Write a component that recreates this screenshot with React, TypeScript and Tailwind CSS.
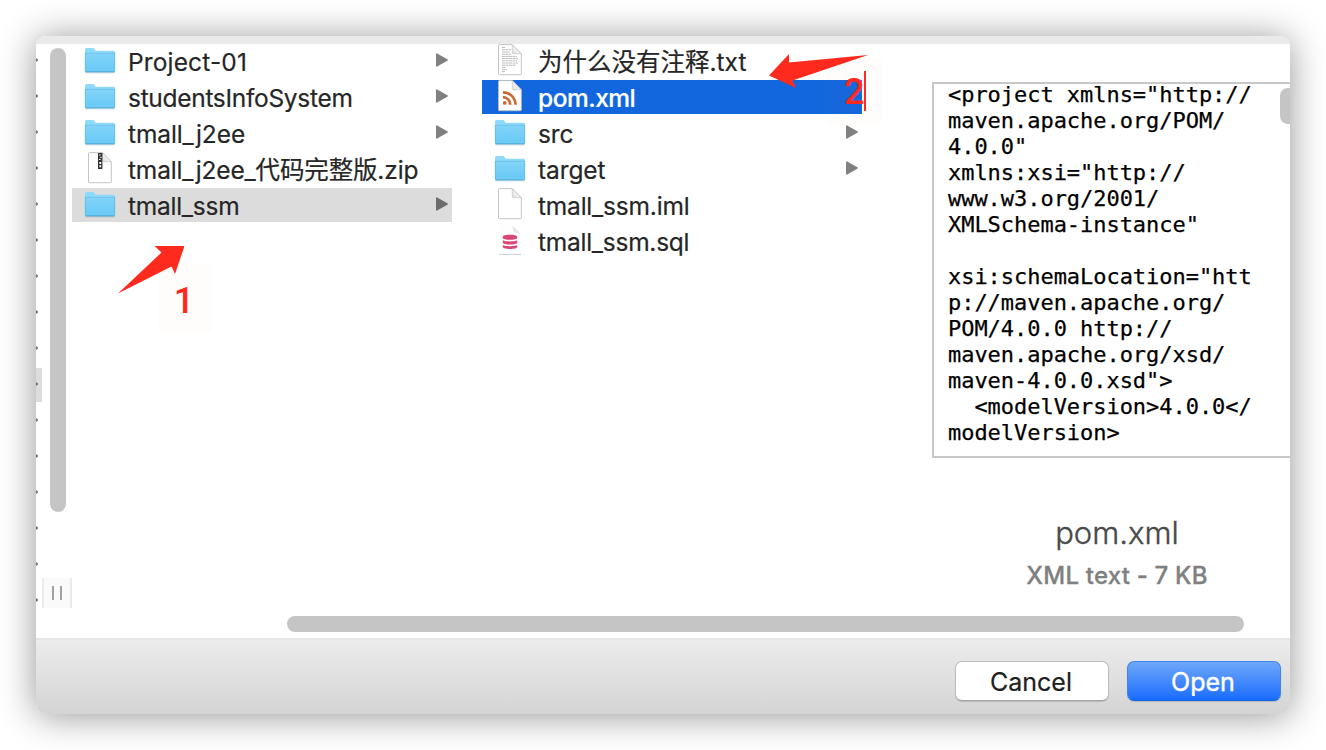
type IconKind = "folder" | "zip" | "text" | "feed" | "blank" | "database";

type Entry = {
  name: string;
  icon: IconKind;
  tracking: string;
};

const projects: Entry[] = [
  { name: "Project-01", icon: "folder", tracking: "tracking-[0.15px]" },
  { name: "studentsInfoSystem", icon: "folder", tracking: "tracking-[-0.3px]" },
  { name: "tmall_j2ee", icon: "folder", tracking: "tracking-[-0.1px]" },
  { name: "tmall_j2ee_代码完整版.zip", icon: "zip", tracking: "tracking-[-0.15px]" },
  { name: "tmall_ssm", icon: "folder", tracking: "tracking-[-0.25px]" },
];

const files: Entry[] = [
  { name: "为什么没有注释.txt", icon: "text", tracking: "tracking-[0px]" },
  { name: "pom.xml", icon: "feed", tracking: "tracking-[-0.5px]" },
  { name: "src", icon: "folder", tracking: "tracking-[-0.1px]" },
  { name: "target", icon: "folder", tracking: "tracking-[-0.1px]" },
  { name: "tmall_ssm.iml", icon: "blank", tracking: "tracking-[-0.2px]" },
  { name: "tmall_ssm.sql", icon: "database", tracking: "tracking-[-0.25px]" },
];

const previewText = `<project xmlns="http://
maven.apache.org/POM/
4.0.0"
xmlns:xsi="http://
www.w3.org/2001/
XMLSchema-instance"

xsi:schemaLocation="htt
p://maven.apache.org/
POM/4.0.0 http://
maven.apache.org/xsd/
maven-4.0.0.xsd">
  <modelVersion>4.0.0</
modelVersion>`;

function FolderIcon() {
  return (
    <svg viewBox="0 0 32 34" className="h-[34px] w-8 shrink-0">
      <defs>
        <linearGradient id="folder" x1="0" y1="0" x2="0" y2="1">
          <stop offset="0" stopColor="#83d4f9" />
          <stop offset="1" stopColor="#66c8f5" />
        </linearGradient>
      </defs>
      <path d="M1.5 28.8h29" stroke="#000" strokeOpacity=".2" strokeWidth="1" />
      <path
        d="M1 5.5Q1 4 2.5 4h6.2q1.2 0 1.8 1l.8 1.3q.3.5 1.2.5h17q1.5 0 1.5 1.5v18.7q0 1-1 1H2q-1 0-1-1z"
        fill="#8fd9fb"
      />
      <path d="M1 9.5h30v17.7q0 1-1 1H2q-1 0-1-1z" fill="url(#folder)" />
      <path d="M1 9.3h30" stroke="#60bce9" strokeWidth=".7" />
      <path d="M1.3 9v18M30.7 9v18" stroke="#53b0de" strokeWidth=".6" />
      <path d="M1.5 26h29" stroke="#7fd2f8" strokeWidth=".7" />
      <path d="M1.5 27.8h29" stroke="#4fa9d6" strokeWidth=".9" />
    </svg>
  );
}

function DocumentIcon({ kind }: { kind: IconKind }) {
  return (
    <svg viewBox="0 0 32 34" className="h-[34px] w-8 shrink-0">
      <defs>
        <linearGradient id="fold" x1="0" y1="1" x2="1" y2="0">
          <stop offset="0" stopColor="#dcdcdc" />
          <stop offset=".6" stopColor="#fafafa" />
        </linearGradient>
      </defs>
      {kind === "database" ? (
        <>
          <path d="M5 1h13l9 9v20H5z" fill="#fefefe" />
          <path d="M5 1h13c1 3 1 6 2 7s4 1 7 2L18 1z" fill="#e6e6e6" />
          <path d="M5 30.4h22" stroke="#cfcfcf" strokeWidth="1" />
        </>
      ) : (
        <>
          <path
            d="M5.5.6h12.8l9 9.2v20q0 .9-.9.9H5.400q-.9 0-.9-.9V1.600q0-1 1-1z"
            fill="#fff"
            stroke="#bdbdbd"
            strokeWidth=".9"
          />
          <path d="M18.300.8v7.600q0 1.300 1.300 1.300h7.500z" fill="url(#fold)" stroke="#c6c6c6" strokeWidth=".7" />
        </>
      )}
      {kind === "text" && (
        <path
          d="M8 3.5h3M8 5.7h9M8 8h8M8 10.2h9M8 12.4h15M8 14.6h16M8 16.8h15M8 19h16M8 21.2h14M8 23.4h4M8 25.6h5M8 27.6h3"
          stroke="#bcbcbc"
          strokeWidth="1"
          strokeDasharray="3.1 .4"
        />
      )}
      {kind === "zip" && (
        <>
          <path d="M14 1h4.4v15.4q0 .6-.6.6h-3.2q-.6 0-.6-.6z" fill="#333" />
          <path d="M15 3h1.6M16 5.3h1.6M15 7.5h1.6" stroke="#fff" strokeWidth="1.1" />
          <path d="M15.4 10h1.8v2h-1.8zM15.4 13.3h1.8v2h-1.8z" fill="#fff" />
        </>
      )}
      {kind === "feed" && (
        <g fill="none" stroke="#ca6b35" strokeWidth="2.7">
          <circle cx="10.7" cy="22.9" r="1.9" fill="#ca6b35" stroke="none" />
          <path d="M8.9 17.2a7.4 7.4 0 0 1 7.4 7.5M8.9 12.3a12.6 12.6 0 0 1 12.7 12.4" />
        </g>
      )}
      {kind === "database" && (
        <g fill="#db4775">
          <path d="M8.8 12.6c0-2.600 14.400-2.600 14.400 0v1.300c0 2.400-14.400 2.400-14.400 0z" />
          <path d="M8.8 16.200c2.500 1.600 11.900 1.600 14.400 0v2.500c0 2.400-14.400 2.400-14.400 0z" />
          <path d="M8.8 21c2.500 1.600 11.900 1.600 14.400 0v2c0 2.600-14.400 2.600-14.400 0z" />
        </g>
      )}
    </svg>
  );
}

function Arrow({ active }: { active: boolean }) {
  return (
    <svg viewBox="0 0 12 14" className="mb-0.5 ml-auto h-3.5 w-3 shrink-0">
      <path
        d="M0 1.2Q0 0 1.1.5L11.4 6.3Q12.3 7 11.4 7.7L1.1 13.5Q0 14 0 12.8z"
        fill={active ? "#6c6c6c" : "#808080"}
      />
    </svg>
  );
}

function FileColumn({ entries, selected, rowClass }: { entries: Entry[]; selected: string; rowClass: string }) {
  return (
    <ul className="flex w-[380px] shrink-0 flex-col gap-0.5">
      {entries.map((entry) => (
        <li
          key={entry.name}
          className={`flex h-[34px] items-center gap-3 pr-1 pl-3 ${entry.name === selected ? rowClass : "text-[#262626]"}`}
        >
          {entry.icon === "folder" ? <FolderIcon /> : <DocumentIcon kind={entry.icon} />}
          <span className={`pt-0.5 text-[24.5px] leading-8 whitespace-nowrap [-webkit-text-stroke:0.2px] ${entry.tracking}`}>
            {entry.name}
          </span>
          {entry.icon === "folder" && <Arrow active={entry.name === selected} />}
        </li>
      ))}
    </ul>
  );
}

// Right edge of the parent column, mostly scrolled out of view
function ParentColumn() {
  return (
    <div className="flex w-1.5 shrink-0 flex-col gap-0.5 overflow-hidden">
      {Array.from({ length: 16 }, (_, i) => (
        <div key={i} className={`flex h-[34px] shrink-0 items-center ${i === 9 ? "bg-[#dcdcdc]" : ""}`}>
          <svg viewBox="0 0 2 4" className="mb-0.5 h-1 w-0.5">
            <path d="M0 0L2 1.5v1L0 4z" fill="#707070" />
          </svg>
        </div>
      ))}
    </div>
  );
}

function Preview() {
  return (
    <div className="ml-[70px] flex w-[370px] shrink-0 flex-col items-center pt-[38px]">
      <div className="flex h-[376px] w-full justify-between overflow-hidden border-2 border-[#c8c8c8] pl-3.5">
        <pre className="-mt-0.5 font-['DejaVu_Sans_Mono',monospace] text-[22px] leading-[26px] tracking-[-0.04px] text-black [-webkit-text-stroke:0.25px]">
          {previewText}
        </pre>
        <div className="mt-1 mr-1 h-9 w-4 shrink-0 rounded-full bg-[#c5c5c5]" />
      </div>
      <div className="mt-[55px] text-[31px] leading-10 font-light text-[#4a4a4a] [-webkit-text-stroke:0.4px]">pom.xml</div>
      <div className="mt-[7px] text-[24px] leading-8 font-medium tracking-[0.2px] text-[#808080] [-webkit-text-stroke:0.3px]">
        XML text - 7 KB
      </div>
    </div>
  );
}

function Annotations() {
  return (
    <>
      <div className="absolute top-[265px] left-[158px] flex h-[68px] w-[54px] items-center justify-center rounded-md bg-[#fefdfc] pt-1 pr-0.5 font-[Roboto,sans-serif] text-[36px] font-medium text-[#ff2a1e]">
        1
      </div>
      <div className="absolute top-[58px] left-[825px] flex h-[66px] w-[58px] items-center rounded-md bg-[#ffa040]/2 pl-[19px] font-[Roboto,sans-serif] text-[36px] font-medium text-[#ff2a1e]">
        <span className="pt-0.5">2</span>
        <span className="h-10 w-0.5 shrink-0 bg-[#ff2a1e]" />
      </div>
      <svg viewBox="0 0 66 47" className="absolute top-[246px] left-[118px] h-[47px] w-[66px]">
        <path d="M0 47.5L43.5 6.5 36.5 0H66.5L57 28 53.5 20.5z" fill="#ff2a1e" />
      </svg>
      <svg viewBox="0 0 99 34" className="absolute top-[54px] left-[769px] h-[34px] w-[99px]">
        <path d="M0 21.5L20 0V8.5L99 1 23.5 26.5 27 34z" fill="#ff2a1e" />
      </svg>
    </>
  );
}

export default function App() {
  return (
    <div className="relative h-[750px] w-[1326px] overflow-hidden bg-white p-9 font-[Inter,'Noto_Sans_CJK_SC',sans-serif]">
      <div className="flex h-[678px] w-[1254px] flex-col overflow-hidden rounded-[10px] bg-white shadow-[0_2px_36px_rgba(0,0,0,0.42)]">
        <div className="h-2 shrink-0 bg-[#eaeaea]" />

        <div className="flex h-[594px] shrink-0">
          <ParentColumn />
          <div className="flex w-[1248px] flex-col overflow-hidden">
            <div className="flex h-[564px] shrink-0">
              <div className="flex w-[30px] shrink-0 flex-col items-center justify-between pt-1">
                <div className="mr-[-2px] h-[464px] w-4 rounded-full bg-[#c5c5c5]" />
                <div className="flex h-[30px] w-[30px] items-center justify-center gap-1.5 border-x-2 border-[#ebebeb] bg-[#fafafa]">
                  <div className="h-3.5 w-0.5 bg-[#a0a0a0]" />
                  <div className="h-3.5 w-0.5 bg-[#a0a0a0]" />
                </div>
              </div>
              <FileColumn entries={projects} selected="tmall_ssm" rowClass="bg-[#dcdcdc] text-[#262626]" />
              <div className="w-[30px] shrink-0" />
              <FileColumn entries={files} selected="pom.xml" rowClass="bg-[#1267df] text-white font-medium" />
              <Preview />
            </div>
            <div className="flex h-[30px] pt-2 pl-[245px]">
              <div className="h-4 w-[957px] rounded-full bg-[#c5c5c5]" />
            </div>
          </div>
        </div>

        <div className="flex flex-1 items-start justify-end gap-[18px] border-t-2 border-[#e5e5e5] bg-linear-to-b from-[#ececec] to-[#d4d4d4] pt-[21px] pr-[9px] text-[25px] leading-10">
          <button className="h-10 w-[154px] rounded-[7px] border border-[#bdbdbd] border-b-[#a5a5a5] bg-white pr-0.5 leading-10 text-[#202020] shadow-[0_1px_1px_rgba(0,0,0,0.15)] [-webkit-text-stroke:0.2px]">
            Cancel
          </button>
          <button className="h-10 w-[154px] rounded-[7px] border border-[#3f86ea] border-b-[#1463e8] bg-linear-to-b from-[#6ea6f9] to-[#156bfe] pr-0.5 leading-10 text-white shadow-[0_1px_1px_rgba(0,0,0,0.15)] [-webkit-text-stroke:0.4px]">
            Open
          </button>
        </div>
      </div>
      <Annotations />
    </div>
  );
}
